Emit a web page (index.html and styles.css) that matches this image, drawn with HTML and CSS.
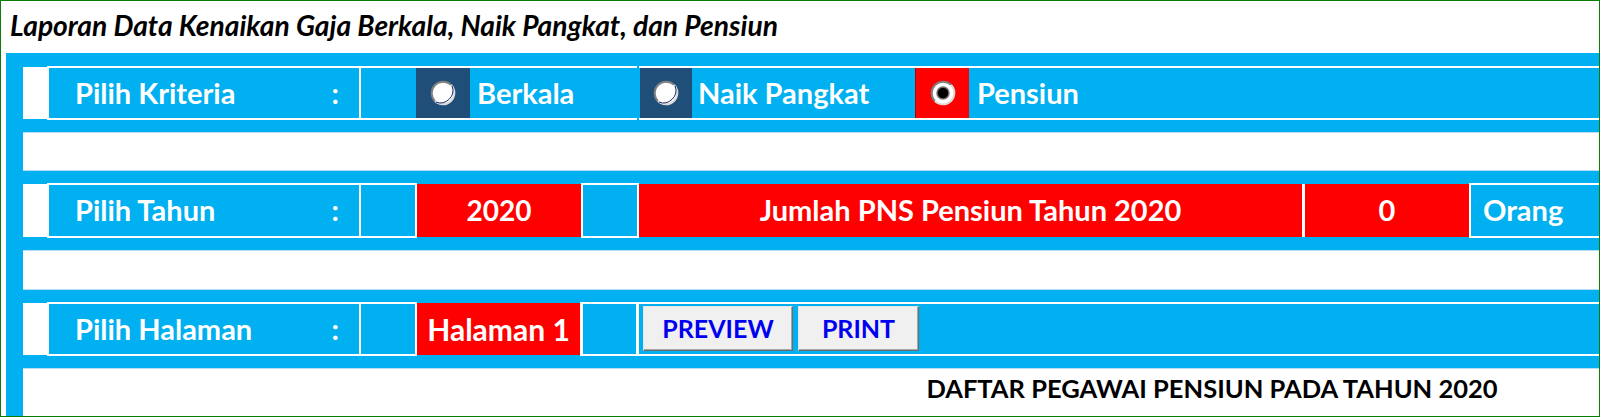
FILE: index.html
```html
<!DOCTYPE html>
<html lang="id">
<head>
<meta charset="utf-8">
<title>Laporan Data Kenaikan Gaja Berkala</title>
<link rel="stylesheet" href="styles.css">
</head>
<body>
<div class="sheet">
  <div class="title">Laporan Data Kenaikan Gaja Berkala, Naik Pangkat, dan Pensiun</div>
  <div class="panel">
    <div class="row row-1">
      <div class="stub"></div>
      <div class="label"><span>Pilih Kriteria</span><span class="colon">:</span></div>
      <div class="seg seg-a">
        <div class="opt">
          <div class="box box-dark">
            <svg class="radio" width="28" height="28" viewBox="0 0 28 28"><circle cx="14" cy="14" r="11.5" fill="#fff"/><path d="M5.87 22.13 A11.5 11.5 0 0 1 22.13 5.87" fill="none" stroke="#7f7f7f" stroke-width="2"/><path d="M22.13 5.87 A11.5 11.5 0 0 1 5.87 22.13" fill="none" stroke="#dcdcdc" stroke-width="2"/><path d="M6.9 23.1 A12.6 12.6 0 0 0 23.1 6.9" fill="none" stroke="#1a2a6a" stroke-width="1"/></svg>
          </div>
          <span class="opt-txt">Berkala</span>
        </div>
      </div>
      <div class="seg seg-b">
        <div class="opt opt-naik">
          <div class="box box-dark box-narrow">
            <svg class="radio" width="28" height="28" viewBox="0 0 28 28"><circle cx="14" cy="14" r="11.5" fill="#fff"/><path d="M5.87 22.13 A11.5 11.5 0 0 1 22.13 5.87" fill="none" stroke="#7f7f7f" stroke-width="2"/><path d="M22.13 5.87 A11.5 11.5 0 0 1 5.87 22.13" fill="none" stroke="#dcdcdc" stroke-width="2"/><path d="M6.9 23.1 A12.6 12.6 0 0 0 23.1 6.9" fill="none" stroke="#1a2a6a" stroke-width="1"/></svg>
          </div>
          <span class="opt-txt opt-txt-naik">Naik Pangkat</span>
        </div>
        <div class="opt">
          <div class="box box-red">
            <svg class="radio" width="28" height="28" viewBox="0 0 28 28"><circle cx="14" cy="14" r="11.5" fill="#fff"/><path d="M5.87 22.13 A11.5 11.5 0 0 1 22.13 5.87" fill="none" stroke="#7f7f7f" stroke-width="2"/><path d="M22.13 5.87 A11.5 11.5 0 0 1 5.87 22.13" fill="none" stroke="#dcdcdc" stroke-width="2"/><circle cx="14" cy="14" r="6" fill="#000" stroke="#6f6f6f" stroke-width="1.5"/></svg>
          </div>
          <span class="opt-txt opt-txt-pensiun">Pensiun</span>
        </div>
      </div>
    </div>

    <div class="band band-1"></div>

    <div class="row row-2">
      <div class="stub"></div>
      <div class="label"><span>Pilih Tahun</span><span class="colon">:</span></div>
      <div class="blank"></div>
      <div class="red red-year">2020</div>
      <div class="blank-box"></div>
      <div class="red red-jumlah">Jumlah PNS Pensiun Tahun 2020</div>
      <div class="red red-count">0</div>
      <div class="orang">Orang</div>
    </div>

    <div class="band band-2"></div>

    <div class="row row-3">
      <div class="stub"></div>
      <div class="label"><span>Pilih Halaman</span><span class="colon">:</span></div>
      <div class="blank"></div>
      <div class="red red-page">Halaman 1</div>
      <div class="tail">
        <div class="tail-blank"></div>
        <button class="btn btn-preview" type="button">PREVIEW</button>
        <button class="btn btn-print" type="button">PRINT</button>
      </div>
    </div>

    <div class="footer">
      <div class="footer-title">DAFTAR PEGAWAI PENSIUN PADA TAHUN 2020</div>
    </div>
  </div>
</div>
</body>
</html>
```

FILE: styles.css
```css
* {
  box-sizing: border-box;
  margin: 0;
  padding: 0;
}

body {
  margin: 0;
  background: #ffffff;
  font-family: Lato, "Open Sans", sans-serif;
}

.sheet {
  width: 1600px;
  height: 417px;
  border: 1px solid #0b7d0b;
  background: #ffffff;
  display: flex;
  flex-direction: column;
  overflow: hidden;
}

.title {
  height: 52px;
  flex: none;
  padding: 8px 0 0 9px;
  font-size: 28.2px;
  line-height: 32px;
  font-weight: 700;
  font-style: italic;
  color: #000000;
  white-space: nowrap;
}

.panel {
  flex: 1;
  margin-left: 5px;
  padding-left: 17px;
  background: #00b0f0;
  display: flex;
  flex-direction: column;
}

/* rows */
.row {
  display: flex;
  flex: none;
  height: 54px;
  color: #ffffff;
  font-weight: 700;
  font-size: 29px;
  line-height: 1.2;
  white-space: nowrap;
}

.row-1 { margin-top: 13px; }
.row-2 { margin-top: 12px; height: 55px; }
.row-3 { margin-top: 12px; }

.band {
  flex: none;
  margin-top: 12px;
  background: #ffffff;
  box-shadow: inset 0 1px 0 #b7def4, inset 0 -1px 0 #b7def4;
}

.band-1 { height: 39px; }
.band-2 { height: 40px; }

.stub {
  width: 24px;
  flex: none;
  margin: 1px 0;
  background: #ffffff;
}

.label {
  width: 314px;
  flex: none;
  display: flex;
  align-items: center;
  padding: 0 20px 0 26px;
  border: 2px solid #ffffff;
}

.colon {
  margin-left: auto;
}

/* row 1: criteria radios */
.seg {
  display: flex;
  border-top: 2px solid #ffffff;
  border-bottom: 2px solid #ffffff;
}

.seg-a {
  width: 276px;
  flex: none;
  padding-left: 55px;
}

.seg-b {
  flex: 1;
  margin-left: 2px;
  padding-left: 1px;
}

.opt {
  display: flex;
  align-items: center;
}

.opt-naik {
  width: 275px;
  flex: none;
}

.box {
  width: 54px;
  flex: none;
  align-self: stretch;
  display: flex;
  align-items: center;
  justify-content: center;
}

.box-dark { background: #1f4e79; }
.box-narrow { width: 52px; }

.box-red {
  background: #ff0000;
  border-left: 1px solid #b00000;
}

.radio {
  display: block;
}

.opt-txt { margin-left: 7px; }
.opt-txt-naik { margin-left: 6px; }
.opt-txt-pensiun { margin-left: 8px; }

/* row 2 and 3 cells */
.blank {
  width: 56px;
  flex: none;
  border: 2px solid #ffffff;
  border-left: 0;
}

.red {
  flex: none;
  margin: 1px 0;
  background: #ff0000;
  display: flex;
  align-items: center;
  justify-content: center;
}

.red-year {
  width: 164px;
  font-size: 28px;
}

.blank-box {
  width: 58px;
  flex: none;
  border: 2px solid #ffffff;
}

.red-jumlah { width: 663px; }

.red-count {
  width: 167px;
  border-left: 3px solid #ffffff;
}

.orang {
  flex: 1;
  display: flex;
  align-items: center;
  padding-left: 12px;
  border: 2px solid #ffffff;
  border-right: 0;
}

.red-page {
  width: 163px;
  font-size: 30px;
}

.tail {
  flex: 1;
  display: flex;
  align-items: flex-start;
  border-top: 2px solid #ffffff;
  border-bottom: 2px solid #ffffff;
  border-left: 3px solid #ffffff;
}

.tail-blank {
  width: 56px;
  flex: none;
  align-self: stretch;
  border-right: 3px solid #ffffff;
}

.btn {
  height: 45px;
  margin-top: 2px;
  background: #f0f0f0;
  border: 1px solid;
  border-color: #e6e6e6 #6d6d6d #6d6d6d #e6e6e6;
  box-shadow: inset -1px -1px 0 #a5a5a5;
  color: #0000f0;
  font-family: Lato, "Open Sans", sans-serif;
  font-weight: 700;
  font-size: 25px;
  line-height: 1;
  display: flex;
  align-items: center;
  justify-content: center;
}

.btn-preview {
  width: 150px;
  margin-left: 4px;
}

.btn-print {
  width: 121px;
  margin-left: 5px;
}

/* footer */
.footer {
  flex: 1;
  margin-top: 12px;
  background: #ffffff;
  box-shadow: inset 0 1px 0 #b7def4;
  padding-top: 5px;
}

.footer-title {
  width: 600px;
  margin-left: 889px;
  text-align: center;
  font-size: 25.5px;
  line-height: 30px;
  font-weight: 700;
  color: #000000;
  white-space: nowrap;
}
```
